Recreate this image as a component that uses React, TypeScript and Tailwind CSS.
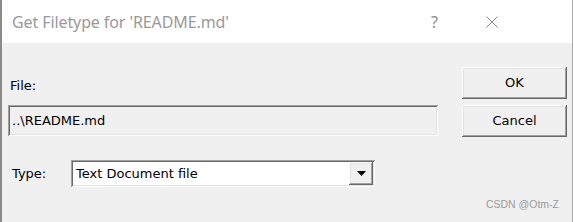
import React from 'react'

const raised =
  'shadow-[inset_-1px_-1px_#696969,inset_1px_1px_#ffffff,inset_-2px_-2px_#a0a0a0,inset_2px_2px_#e3e3e3]'
const sunken =
  'shadow-[inset_1px_1px_#a0a0a0,inset_-1px_-1px_#ffffff,inset_2px_2px_#696969,inset_-2px_-2px_#e3e3e3]'

function Button({ children }: { children: React.ReactNode }) {
  return (
    <button
      className={`flex h-[32px] w-[105px] items-center justify-center bg-[#f0f0f0] text-[13px] text-black ${raised}`}
    >
      {children}
    </button>
  )
}

export default function App() {
  return (
    <div className="relative flex h-[222px] w-[573px] overflow-hidden font-['DejaVu_Sans',Verdana,sans-serif]">
      <div className="w-[2px] bg-[#8c8a86]" />
      <div className="flex flex-1 flex-col border-r border-[#a8a8a8]">
        {/* title bar */}
        <div className="flex h-[43px] items-center bg-white pl-[10px]">
          <span className="font-['Noto_Sans',sans-serif] text-[16px] tracking-[-0.1px] text-[#999999]">
            Get Filetype for 'README.md'
          </span>
          <span className="ml-auto mr-[48px] font-['Noto_Sans',sans-serif] text-[16px] text-[#8a8a8a]">?</span>
          <svg width="12" height="12" viewBox="0 0 12 12" className="mr-[74px]">
            <path d="M0.5 0.5L11.5 11.5M11.5 0.5L0.5 11.5" stroke="#8a8a8a" strokeWidth="1" />
          </svg>
        </div>

        {/* body */}
        <div className="flex flex-1 bg-[#f0f0f0]">
          <div className="ml-[6px] flex w-[430px] flex-col">
            <div className="mt-[35px] pl-[2px] text-[13px] leading-[16px] text-black">File:</div>
            <div
              className={`mt-[11px] flex h-[31px] items-center bg-[#f0f0f0] pl-[4px] text-[13px] text-black ${sunken}`}
            >
              ..\README.md
            </div>
            <div className="mt-[24px] flex items-center">
              <span className="w-[63px] pl-[4px] text-[13px] text-black">Type:</span>
              <div
                className={`flex h-[27px] w-[304px] items-center bg-white pl-[5px] pr-[2px] text-[13px] text-black ${sunken}`}
              >
                <span>Text Document file</span>
                <div
                  className={`ml-auto flex h-[23px] w-[24px] items-center justify-center bg-[#f0f0f0] ${raised}`}
                >
                  <svg width="9" height="5" viewBox="0 0 9 5">
                    <path d="M0 0H9L4.5 5Z" fill="#000" />
                  </svg>
                </div>
              </div>
            </div>
          </div>
          <div className="ml-auto mr-[5px] mt-[24px] flex flex-col gap-[6px]">
            <Button>OK</Button>
            <Button>Cancel</Button>
          </div>
        </div>
      </div>
      <span className="absolute bottom-[9px] right-[14px] font-['Liberation_Sans',Arial,sans-serif] text-[10.5px] text-[#9a9a9a]">
        CSDN @Otm-Z
      </span>
    </div>
  )
}
